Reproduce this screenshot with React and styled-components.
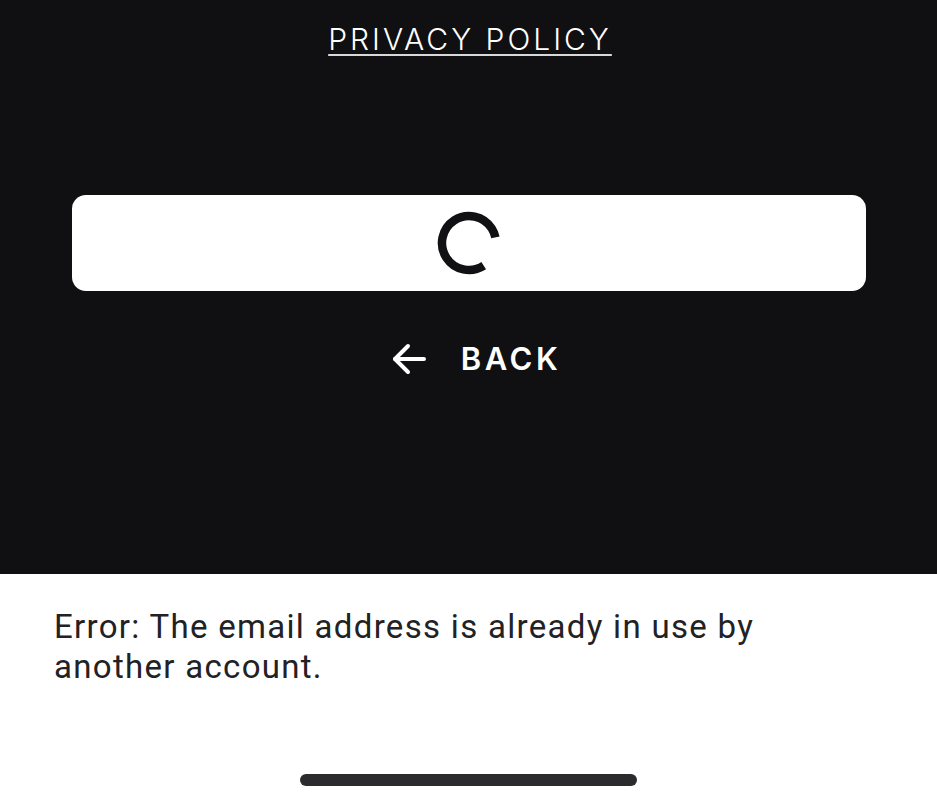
import React from "react";
import styled, { createGlobalStyle } from "styled-components";

const Global = createGlobalStyle`
  html, body { margin: 0; padding: 0; background: #ffffff; }
  body { width: 937px; height: 798px; overflow: hidden; }
`;

const Screen = styled.div`
  width: 937px;
  height: 798px;
  display: flex;
  flex-direction: column;
  background: #ffffff;
`;

const DarkPanel = styled.div`
  height: 574px;
  background: #100f12;
  display: flex;
  flex-direction: column;
  align-items: center;
  padding-top: 20px;
  box-sizing: border-box;
`;

const PolicyLink = styled.a`
  font-family: "Inter", "Open Sans", sans-serif;
  font-size: 30px;
  font-weight: 300;
  line-height: 38px;
  color: #ffffff;
  text-decoration: underline;
  text-decoration-thickness: 1.5px;
  text-decoration-color: #d8d8d8;
  text-underline-offset: 4px;
  letter-spacing: 3px;
  margin-right: -3px;
`;

const PrimaryButton = styled.button`
  margin-top: 137px;
  width: 794px;
  height: 96px;
  border: none;
  border-radius: 14px;
  background: #ffffff;
  display: flex;
  align-items: center;
  justify-content: center;
  padding: 0;
`;

const BackRow = styled.div`
  margin-top: 50px;
  display: flex;
  align-items: center;
  gap: 35px;
  color: #ffffff;
  margin-left: 16px;
`;

const BackLabel = styled.span`
  font-family: "Inter", "Open Sans", sans-serif;
  font-size: 31px;
  font-weight: 600;
  letter-spacing: 3.5px;
  line-height: 36px;
`;

const LightPanel = styled.div`
  flex: 1;
  display: flex;
  flex-direction: column;
  padding: 33px 54px 0;
  box-sizing: border-box;
`;

const ErrorText = styled.p`
  margin: 0;
  font-family: "Roboto", "Liberation Sans", sans-serif;
  font-size: 33px;
  line-height: 40px;
  color: #222224;
  letter-spacing: 1.3px;
  max-width: 780px;
`;

const HomeBar = styled.div`
  margin: auto auto 12px;
  width: 337px;
  height: 12px;
  border-radius: 6px;
  background: #2b2a2d;
`;

function Spinner() {
  const r = 27;
  const c = 2 * Math.PI * r;
  const arc = (290 / 360) * c;
  return (
    <svg width="64" height="64" viewBox="0 0 64 64" style={{ display: "block" }}>
      <circle
        cx="32"
        cy="32"
        r={r}
        fill="none"
        stroke="#111013"
        strokeWidth="8.5"
        strokeDasharray={`${arc} ${c}`}
        transform="rotate(57 32 32)"
      />
    </svg>
  );
}

function ArrowLeft() {
  return (
    <svg width="34" height="32" viewBox="0 0 34 32" fill="none" stroke="#ffffff" strokeWidth="4" strokeLinecap="round" strokeLinejoin="round">
      <path d="M32 16H3" />
      <path d="M16 3L3 16l13 13" />
    </svg>
  );
}

export default function App() {
  return (
    <>
      <Global />
      <Screen>
        <DarkPanel>
          <PolicyLink href="#">PRIVACY POLICY</PolicyLink>
          <PrimaryButton>
            <Spinner />
          </PrimaryButton>
          <BackRow>
            <ArrowLeft />
            <BackLabel>BACK</BackLabel>
          </BackRow>
        </DarkPanel>
        <LightPanel>
          <ErrorText>Error: The email address is already in use by another account.</ErrorText>
          <HomeBar />
        </LightPanel>
      </Screen>
    </>
  );
}
